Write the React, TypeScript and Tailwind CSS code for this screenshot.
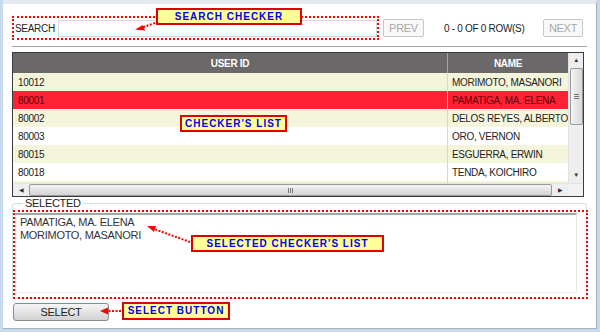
import React from "react";

const rows = [
  { id: "10012", name: "MORIMOTO, MASANORI", bg: "bg-[#f5f5dc]", text: "text-[#222]" },
  { id: "80001", name: "PAMATIGA, MA. ELENA", bg: "bg-[#ff2234]", text: "text-[#5c0008]" },
  { id: "80002", name: "DELOS REYES, ALBERTO", bg: "bg-[#f5f5dc]", text: "text-[#222]" },
  { id: "80003", name: "ORO, VERNON", bg: "bg-white", text: "text-[#222]" },
  { id: "80015", name: "ESGUERRA, ERWIN", bg: "bg-[#f5f5dc]", text: "text-[#222]" },
  { id: "80018", name: "TENDA, KOICHIRO", bg: "bg-white", text: "text-[#222]" },
];

const Note = ({ label, className }: { label: string; className: string }) => (
  <div
    className={`absolute flex items-center justify-center whitespace-nowrap bg-[#ffff99] border-2 border-[#e00000] text-[#0000ee] font-bold text-[10px] tracking-[1px] leading-none ${className}`}
    style={{ fontFamily: '"Liberation Sans", Arial, sans-serif' }}
  >
    {label}
  </div>
);

const App = () => {
  return (
    <div
      className="relative w-[600px] h-[332px] bg-[#c6d9ee] pl-[3px] pr-[3px] pb-[3px] text-[10px] tracking-[-0.3px] text-[#222]"
      style={{ fontFamily: '"Liberation Sans", Arial, sans-serif' }}
    >
      <div className="h-full bg-white border-t-[4px] border-t-[#e3e9f0] border-r border-b border-r-[#a9b1ba] border-b-[#a9b1ba] px-[9px]">
        {/* search row */}
        <div className="flex items-center mt-[12px] h-[24px]">
          <div className="flex items-center w-[367px] h-[24px] border-2 border-dotted border-[#f00] pl-[1px]">
            <span className="w-[43px] shrink-0">SEARCH</span>
            <div className="flex-1 h-[17px] border border-[#d6d6d6] bg-white"></div>
          </div>
          <div className="ml-[4px] w-[41px] h-[18px] flex items-center justify-center border border-[#c8c8c8] rounded-[2px] text-[11px] text-[#a8a8a8] bg-[#f8f8f8]">
            PREV
          </div>
          <div className="ml-[20px] w-[99px] whitespace-nowrap">0 - 0 OF 0 ROW(S)</div>
          <div className="w-[40px] h-[18px] flex items-center justify-center border border-[#c8c8c8] rounded-[2px] text-[11px] text-[#a8a8a8] bg-[#f8f8f8]">
            NEXT
          </div>
        </div>

        <div className="mt-[6px] w-[575px] h-px bg-[#a4a4a4]"></div>

        {/* checker's list */}
        <div className="mt-[5px] w-[572px] h-[145px] border border-[#3c3c3c] flex flex-col bg-white">
          <div className="flex h-[130px]">
            <div className="w-[555px] flex flex-col">
              <div className="flex h-[20px] bg-[#6a6868] text-white font-bold">
                <div className="w-[434px] flex items-center justify-center">USER ID</div>
                <div className="w-px bg-[#a6a4a4]"></div>
                <div className="w-[120px] flex items-center justify-center">NAME</div>
              </div>
              <div className="h-[110px] overflow-hidden">
                {rows.map((r) => (
                  <div key={r.id} className={`flex h-[18px] ${r.bg} ${r.text}`}>
                    <div className="w-[434px] flex items-center pl-[5px]">{r.id}</div>
                    <div className="w-px bg-[#d6d6d6]"></div>
                    <div className="w-[120px] flex items-center pl-[4px] whitespace-nowrap">{r.name}</div>
                  </div>
                ))}
                <div className="flex h-[18px] bg-[#f5f5dc]">
                  <div className="w-[434px]"></div>
                  <div className="w-px bg-[#d6d6d6]"></div>
                </div>
              </div>
            </div>
            {/* vertical scrollbar */}
            <div className="w-[15px] bg-[#eeeeee] flex flex-col items-center border-l border-[#e2e2e2]">
              <div className="h-[15px] flex items-center justify-center text-[6px] text-[#333]">▲</div>
              <div className="w-[13px] h-[57px] bg-gradient-to-r from-[#f4f4f4] to-[#d8d8d8] border border-[#9a9a9a] rounded-[2px] flex items-center justify-center">
                <div className="flex flex-col gap-[1px]">
                  <div className="w-[5px] h-px bg-[#777]"></div>
                  <div className="w-[5px] h-px bg-[#777]"></div>
                  <div className="w-[5px] h-px bg-[#777]"></div>
                </div>
              </div>
              <div className="flex-1"></div>
              <div className="h-[15px] flex items-center justify-center text-[6px] text-[#333]">▼</div>
            </div>
          </div>
          {/* horizontal scrollbar */}
          <div className="flex h-[13px] bg-[#eeeeee] border-t border-[#e2e2e2]">
            <div className="w-[16px] flex items-center justify-center text-[6px] text-[#333]">◀</div>
            <div className="w-[523px] h-[12px] bg-gradient-to-b from-[#f4f4f4] to-[#d4d4d4] border border-[#9a9a9a] rounded-[2px] flex items-center justify-center">
              <div className="flex gap-[1px]">
                <div className="w-px h-[5px] bg-[#777]"></div>
                <div className="w-px h-[5px] bg-[#777]"></div>
                <div className="w-px h-[5px] bg-[#777]"></div>
              </div>
            </div>
            <div className="w-[16px] flex items-center justify-center text-[6px] text-[#333]">▶</div>
            <div className="w-[15px] bg-[#f2f2f2]"></div>
          </div>
        </div>

        {/* selected */}
        <fieldset className="w-[575px] h-[102px] border border-[#d3dce6] rounded-[3px] px-[2px]">
          <legend className="ml-[8px] px-[2px] leading-[12px] text-[11px] text-[#222]">SELECTED</legend>
          <div className="mt-[4px] w-[562px] h-[80px] border-t-2 border-t-[#a8a8a8] border-x border-b border-x-[#e6e6e6] border-b-[#ececec] pl-[4px] pt-[1px] text-[11px] leading-[13px] text-[#333]">
            <div>PAMATIGA, MA. ELENA</div>
            <div>MORIMOTO, MASANORI</div>
          </div>
        </fieldset>

        <button className="mt-[4px] ml-px w-[96px] h-[18px] flex items-center justify-center bg-gradient-to-b from-[#f6f6f6] to-[#d2d2d2] border border-[#8c8c8c] rounded-[3px] text-[11px] text-[#222]">
          SELECT
        </button>
      </div>

      {/* annotations */}
      <div className="absolute left-[13px] top-[210px] w-[575px] h-[89px] border-2 border-dotted border-[#f00] pointer-events-none"></div>
      <Note label="SEARCH CHECKER" className="left-[156px] top-[8px] w-[146px] h-[17px]" />
      <Note label="CHECKER'S LIST" className="left-[180px] top-[115px] w-[107px] h-[17px]" />
      <Note label="SELECTED CHECKER'S LIST" className="left-[191px] top-[235px] w-[193px] h-[17px]" />
      <Note label="SELECT BUTTON" className="left-[122px] top-[302px] w-[108px] h-[18px]" />
      <svg className="absolute left-0 top-0 pointer-events-none" width="600" height="332">
        <g stroke="#f00" strokeWidth="2" strokeDasharray="2 1.5" fill="none">
          <line x1="155" y1="23" x2="142" y2="27.5" />
          <line x1="190" y1="242" x2="154" y2="229" />
          <line x1="121" y1="311" x2="107" y2="311" />
        </g>
        <g fill="#f00">
          <polygon points="135,29.5 143,25 145,30.5" />
          <polygon points="147,226 156,226 154,232" />
          <polygon points="100,311 108,307.5 108,314.5" />
        </g>
      </svg>
    </div>
  );
};

export default App;
